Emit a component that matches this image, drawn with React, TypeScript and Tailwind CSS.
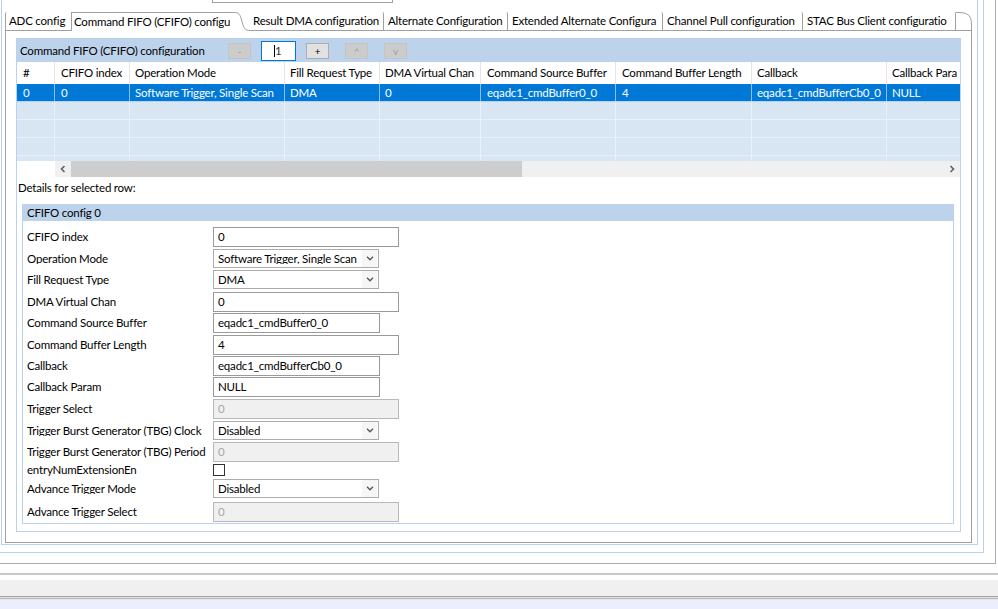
import React from "react";

const COLS = [
  { w: "w-[38px]", pl: "pl-[6px]", border: true, head: "#", val: "0" },
  { w: "w-[75px]", pl: "pl-[6px]", border: true, head: "CFIFO index", val: "0" },
  { w: "w-[155px]", pl: "pl-[5px]", border: true, head: "Operation Mode", val: "Software Trigger, Single Scan" },
  { w: "w-[95px]", pl: "pl-[5px]", border: true, head: "Fill Request Type", val: "DMA" },
  { w: "w-[101px]", pl: "pl-[5px]", border: true, head: "DMA Virtual Chan", val: "0" },
  { w: "w-[135px]", pl: "pl-[6px]", border: true, head: "Command Source Buffer", val: "eqadc1_cmdBuffer0_0" },
  { w: "w-[136px]", pl: "pl-[6px]", border: true, head: "Command Buffer Length", val: "4" },
  { w: "w-[135px]", pl: "pl-[5px]", border: true, head: "Callback", val: "eqadc1_cmdBufferCb0_0" },
  { w: "w-[73px]", pl: "pl-[5px]", border: false, head: "Callback Para", val: "NULL" },
];

type Row = {
  label: string;
  h: string;
  kind: "text" | "select" | "disabled" | "check";
  w?: string;
  value?: string;
};

const ROWS: Row[] = [
  { label: "CFIFO index", h: "h-[22px]", kind: "text", w: "w-[186px]", value: "0" },
  { label: "Operation Mode", h: "h-[21px]", kind: "select", value: "Software Trigger, Single Scan" },
  { label: "Fill Request Type", h: "h-[22px]", kind: "select", value: "DMA" },
  { label: "DMA Virtual Chan", h: "h-[21px]", kind: "text", w: "w-[186px]", value: "0" },
  { label: "Command Source Buffer", h: "h-[22px]", kind: "text", w: "w-[167px]", value: "eqadc1_cmdBuffer0_0" },
  { label: "Command Buffer Length", h: "h-[21px]", kind: "text", w: "w-[186px]", value: "4" },
  { label: "Callback", h: "h-[21px]", kind: "text", w: "w-[167px]", value: "eqadc1_cmdBufferCb0_0" },
  { label: "Callback Param", h: "h-[22px]", kind: "text", w: "w-[167px]", value: "NULL" },
  { label: "Trigger Select", h: "h-[22px]", kind: "disabled", value: "0" },
  { label: "Trigger Burst Generator (TBG) Clock", h: "h-[21px]", kind: "select", value: "Disabled" },
  { label: "Trigger Burst Generator (TBG) Period", h: "h-[22px]", kind: "disabled", value: "0" },
  { label: "entryNumExtensionEn", h: "h-[15px]", kind: "check" },
  { label: "Advance Trigger Mode", h: "h-[23px]", kind: "select", value: "Disabled" },
  { label: "Advance Trigger Select", h: "h-[21px]", kind: "disabled", value: "0" },
];

function Chevron() {
  return (
    <svg width="8" height="5" viewBox="0 0 8 5" className="block">
      <polyline points="1,0.8 4,3.8 7,0.8" fill="none" stroke="#555" strokeWidth="1.3" />
    </svg>
  );
}

function Control({ r }: { r: Row }) {
  if (r.kind === "text") {
    return (
      <div className={`${r.w} h-[20px] border border-[#9a9a9a] bg-white pl-[4px] flex items-center whitespace-nowrap overflow-hidden`}>
        {r.value}
      </div>
    );
  }
  if (r.kind === "disabled") {
    return (
      <div className="w-[186px] h-[20px] border border-[#b8b8b8] bg-[#f0f0f0] pl-[4px] flex items-center text-[#a6a6a6]">
        {r.value}
      </div>
    );
  }
  if (r.kind === "select") {
    return (
      <div className="w-[166px] h-[19px] border border-[#acacac] bg-white flex items-center">
        <div className="flex-1 pl-[4px] whitespace-nowrap overflow-hidden">{r.value}</div>
        <div className="w-[15px] h-full bg-[#f6f6f6] flex items-center justify-center mr-px">
          <Chevron />
        </div>
      </div>
    );
  }
  return <div className="w-[12px] h-[12px] border border-[#333333] bg-white" />;
}

function ToolBtn({ children, disabled, className }: { children: React.ReactNode; disabled?: boolean; className?: string }) {
  return (
    <div
      className={`${className ?? ""} w-[23px] h-[16px] border flex items-center justify-center text-[10px] ${
        disabled ? "bg-[#cccccc] border-[#c4c4c4] text-[#9c9c9c]" : "bg-[#e1e1e1] border-[#adadad] text-black"
      }`}
    >
      {children}
    </div>
  );
}

function Tabs() {
  const other = [
    { w: "w-[134px]", pl: "pl-[3px]", t: "Result DMA configuration" },
    { w: "w-[124px]", pl: "pl-[4px]", t: "Alternate Configuration" },
    { w: "w-[155px]", pl: "pl-[4px]", t: "Extended Alternate Configura" },
    { w: "w-[140px]", pl: "pl-[4px]", t: "Channel Pull configuration" },
    { w: "w-[153px]", pl: "pl-[4px]", t: "STAC Bus Client configuratio" },
  ];
  return (
    <div className="h-[19px] shrink-0 flex">
      <div className="w-[66px] shrink-0 border-l border-b border-[#a0a0a0] rounded-tl-[2px] pl-[3px] flex items-center whitespace-nowrap overflow-hidden">
        ADC config
      </div>
      <div className="w-[163px] shrink-0 border-l border-t border-[#a0a0a0] pl-[2px] flex items-center whitespace-nowrap overflow-hidden bg-white">
        Command FIFO (CFIFO) configu
      </div>
      <svg width="16" height="19" viewBox="0 0 16 19" className="block shrink-0">
        <path d="M0 0.5 C5 0.5 6 2 8 9.5 C10 17 11 18.5 16 18.5" fill="none" stroke="#a0a0a0" />
      </svg>
      {other.map((o) => (
        <div
          key={o.t}
          className={`${o.w} ${o.pl} shrink-0 border-r border-b border-[#a0a0a0] rounded-tr-[2px] flex items-center whitespace-nowrap overflow-hidden`}
        >
          {o.t}
        </div>
      ))}
      <div className="w-[16px] shrink-0 border-b border-[#a0a0a0]">
        <svg width="16" height="18" viewBox="0 0 16 18" className="block">
          <path d="M-4 0.5 H4 Q15.5 0.5 15.5 11 V18" fill="none" stroke="#a0a0a0" />
        </svg>
      </div>
    </div>
  );
}

function Table() {
  return (
    <div className="h-[99px] overflow-hidden shrink-0">
      <div className="flex h-[22px] bg-white">
        {COLS.map((c) => (
          <div
            key={c.head}
            className={`${c.w} ${c.pl} shrink-0 h-full flex items-center whitespace-nowrap overflow-hidden ${c.border ? "border-r border-[#e5e5e5]" : ""}`}
          >
            {c.head}
          </div>
        ))}
      </div>
      <div className="flex h-[18px] bg-[#0078d7] text-white border-b border-[#b7d3ef]">
        {COLS.map((c) => (
          <div
            key={c.head}
            className={`${c.w} ${c.pl} shrink-0 h-full flex items-center whitespace-nowrap overflow-hidden ${c.border ? "border-r border-[#8fbeec]" : ""}`}
          >
            {c.val}
          </div>
        ))}
      </div>
      {[0, 1, 2, 3].map((i) => (
        <div key={i} className="flex h-[18px] bg-[#d8e5f3] border-b border-[#eaf0f7]">
          {COLS.map((c) => (
            <div key={c.head} className={`${c.w} shrink-0 h-full ${c.border ? "border-r border-[#eaf0f7]" : ""}`} />
          ))}
        </div>
      ))}
    </div>
  );
}

function Scrollbar() {
  return (
    <div className="h-[16px] flex shrink-0">
      <div className="w-[38px] bg-white" />
      <div className="flex-1 bg-[#f0f0f0] flex">
        <div className="w-[16px] h-full flex items-center justify-center">
          <svg width="6" height="8" viewBox="0 0 6 8" className="block">
            <polyline points="4.5,1 1.5,4 4.5,7" fill="none" stroke="#606060" strokeWidth="1.6" />
          </svg>
        </div>
        <div className="w-[451px] h-full bg-[#cdcdcd]" />
        <div className="flex-1" />
        <div className="w-[16px] h-full flex items-center justify-center">
          <svg width="6" height="8" viewBox="0 0 6 8" className="block">
            <polyline points="1.5,1 4.5,4 1.5,7" fill="none" stroke="#606060" strokeWidth="1.6" />
          </svg>
        </div>
      </div>
    </div>
  );
}

function Details() {
  return (
    <div className="ml-[5px] mr-[6px] h-[320px] shrink-0 border-l border-r border-b border-[#b9d1ec] flex flex-col">
      <div className="h-[17px] shrink-0 bg-[#bdd3ec] flex items-center pl-[4px]">CFIFO config 0</div>
      <div className="pt-[6px] pl-[4px] flex flex-col">
        {ROWS.map((r) => (
          <div key={r.label} className={`${r.h} flex items-start`}>
            <div className="flex items-center">
              <div className="w-[186px] whitespace-nowrap overflow-hidden">{r.label}</div>
              <Control r={r} />
            </div>
          </div>
        ))}
      </div>
    </div>
  );
}

function Section() {
  return (
    <div className="h-full border border-[#b9d1ec] flex flex-col">
      <div className="h-[23px] shrink-0 bg-[#bdd3ec] flex items-center">
        <div className="w-[211px] pl-[3px] whitespace-nowrap overflow-hidden">Command FIFO (CFIFO) configuration</div>
        <ToolBtn disabled>-</ToolBtn>
        <div className="ml-[10px] w-[35px] h-[20px] border border-[#0078d7] bg-white flex items-center pl-[12px]">
          <span className="w-px h-[12px] bg-black" />
          <span className="text-[#333]">1</span>
        </div>
        <ToolBtn className="ml-[10px]">+</ToolBtn>
        <ToolBtn className="ml-[16px]" disabled>
          ^
        </ToolBtn>
        <ToolBtn className="ml-[16px]" disabled>
          v
        </ToolBtn>
      </div>
      <Table />
      <Scrollbar />
      <div className="h-[27px] shrink-0 pt-[5px] pl-px">Details for selected row:</div>
      <Details />
    </div>
  );
}

export default function App() {
  return (
    <div className="w-[998px] h-[609px] bg-white overflow-hidden flex flex-col font-['Lato',sans-serif] text-[11.5px] tracking-[-0.2px] leading-none text-black">
      <div className="w-[996px] h-[564px] shrink-0 border-r border-b border-[#acacac] pr-[11px] pb-[10px]">
        <div className="h-full border-r border-b border-[#b9d1ec] pr-[5px] pb-[7px]">
          <div className="h-full ml-px border-l border-r border-b border-[#b9d1ec] pl-[3px] pr-[5px] pb-px flex flex-col">
            <div className="h-[12px] shrink-0">
              <div className="ml-[207px] w-[181px] h-[3px] border-l border-r border-b border-[#a0a0a0]" />
            </div>
            <Tabs />
            <div className="flex-1 border-l border-r border-b border-[#a0a0a0] pt-[7px] pb-[10px] px-[10px]">
              <Section />
            </div>
          </div>
        </div>
      </div>
      <div className="h-[9px] shrink-0" />
      <div className="h-[2px] shrink-0 bg-[#c8c8c8]" />
      <div className="h-[5px] shrink-0" />
      <div className="h-[16px] shrink-0 bg-[#f0f0f0]" />
      <div className="h-px shrink-0 bg-[#a0a0a0]" />
      <div className="h-px shrink-0 bg-[#e3e3e3]" />
      <div className="h-px shrink-0 bg-[#b4b4b4]" />
      <div className="h-px shrink-0 bg-[#e8e4ee]" />
      <div className="flex-1 bg-[#eceffb]" />
    </div>
  );
}
